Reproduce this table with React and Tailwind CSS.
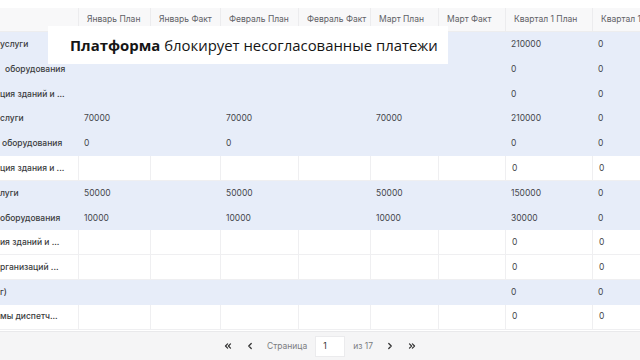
import { ChevronLeft, ChevronRight, ChevronsLeft, ChevronsRight } from 'lucide-react';

const widths = ['w-[78px]', 'w-[72px]', 'w-[70px]', 'w-[78px]', 'w-[72px]', 'w-[68px]', 'w-[67px]', 'w-[87px]', 'w-[90px]'];

const headers = ['', 'Январь План', 'Январь Факт', 'Февраль План', 'Февраль Факт', 'Март План', 'Март Факт', 'Квартал 1 План', 'Квартал 1 Факт'];

// name is the visible (scrolled) part of the first column
const rows = [
  { name: 'услуги', pad: 'pl-0', blue: true, v: ['', '', '', '', '', '', '210000', '0'] },
  { name: 'оборудования', pad: 'pl-[5px]', blue: true, v: ['', '', '', '', '', '', '0', '0'] },
  { name: 'ция зданий и ...', pad: 'pl-0', blue: true, v: ['', '', '', '', '', '', '0', '0'] },
  { name: 'слуги', pad: 'pl-0', blue: true, v: ['70000', '', '70000', '', '70000', '', '210000', '0'] },
  { name: 'оборудования', pad: 'pl-[2px]', blue: true, v: ['0', '', '0', '', '', '', '0', '0'] },
  { name: 'ция здания и ...', pad: 'pl-0', blue: false, v: ['', '', '', '', '', '', '0', '0'] },
  { name: 'луги', pad: 'pl-0', blue: true, v: ['50000', '', '50000', '', '50000', '', '150000', '0'] },
  { name: 'оборудования', pad: 'pl-0', blue: true, v: ['10000', '', '10000', '', '10000', '', '30000', '0'] },
  { name: 'ия зданий и ...', pad: 'pl-0', blue: false, v: ['', '', '', '', '', '', '0', '0'] },
  { name: 'рганизаций ...', pad: 'pl-0', blue: false, v: ['', '', '', '', '', '', '0', '0'] },
  { name: 'г)', pad: 'pl-0', blue: true, v: ['', '', '', '', '', '', '0', '0'] },
  { name: 'мы диспетч...', pad: 'pl-0', blue: false, v: ['', '', '', '', '', '', '0', '0'] },
];

const App = () => {
  return (
    <div className="relative w-[640px] h-[360px] overflow-hidden bg-white font-['Inter',sans-serif]">
      <div className="h-[8px]" />

      {/* Header */}
      <div className="flex h-[24px] bg-[#f8f8f9] border-b border-[#ededee]">
        {headers.map((h, i) => (
          <div
            key={i}
            className={`${widths[i]} shrink-0 flex items-center pl-[8px] text-[8.5px] text-[#5f6166] whitespace-nowrap overflow-hidden ${i > 0 ? 'border-l border-[#ececee]' : ''}`}
          >
            {h}
          </div>
        ))}
      </div>

      {/* Body */}
      {rows.map((r, ri) => (
        <div
          key={ri}
          className={`flex h-[24.8px] ${r.blue ? 'bg-[#e7edf9]' : 'bg-white border-b border-[#efeff1]'}`}
        >
          <div className={`${widths[0]} ${r.pad} shrink-0 flex items-center text-[8.5px] font-medium text-[#3a3c40] whitespace-nowrap overflow-hidden`}>
            {r.name}
          </div>
          {r.v.map((val, ci) => (
            <div
              key={ci}
              className={`${widths[ci + 1]} shrink-0 flex items-center pl-[6px] text-[8.5px] text-[#45474c] whitespace-nowrap overflow-hidden ${r.blue ? '' : 'border-l border-[#efeff1]'}`}
            >
              {val}
            </div>
          ))}
        </div>
      ))}

      {/* Pagination */}
      <div className="absolute left-0 right-0 bottom-0 h-[29px] bg-[#f5f5f6] border-t border-[#e9e9eb] flex items-center justify-center gap-[8px] text-[8.5px] text-[#7a7c80]">
        <ChevronsLeft size={10} strokeWidth={3} className="text-[#333]" />
        <ChevronLeft size={10} strokeWidth={3} className="text-[#333] ml-[4px]" />
        <span className="ml-[4px]">Страница</span>
        <div className="w-[30px] h-[21px] bg-white border border-[#ebebed] flex items-center pl-[7px] text-[#333]">1</div>
        <span>из 17</span>
        <ChevronRight size={10} strokeWidth={3} className="text-[#333] ml-[4px]" />
        <ChevronsRight size={10} strokeWidth={3} className="text-[#333] ml-[4px]" />
      </div>

      {/* Caption overlay */}
      <div className="absolute left-[48px] top-[26px] w-[400px] h-[38px] bg-white flex items-center pl-[22px] font-['Open_Sans',sans-serif] text-[14.9px] text-[#151515] whitespace-nowrap">
        <span className="font-bold">Платформа</span>
        <span>&nbsp;блокирует несогласованные платежи</span>
      </div>
    </div>
  );
};

export default App;
